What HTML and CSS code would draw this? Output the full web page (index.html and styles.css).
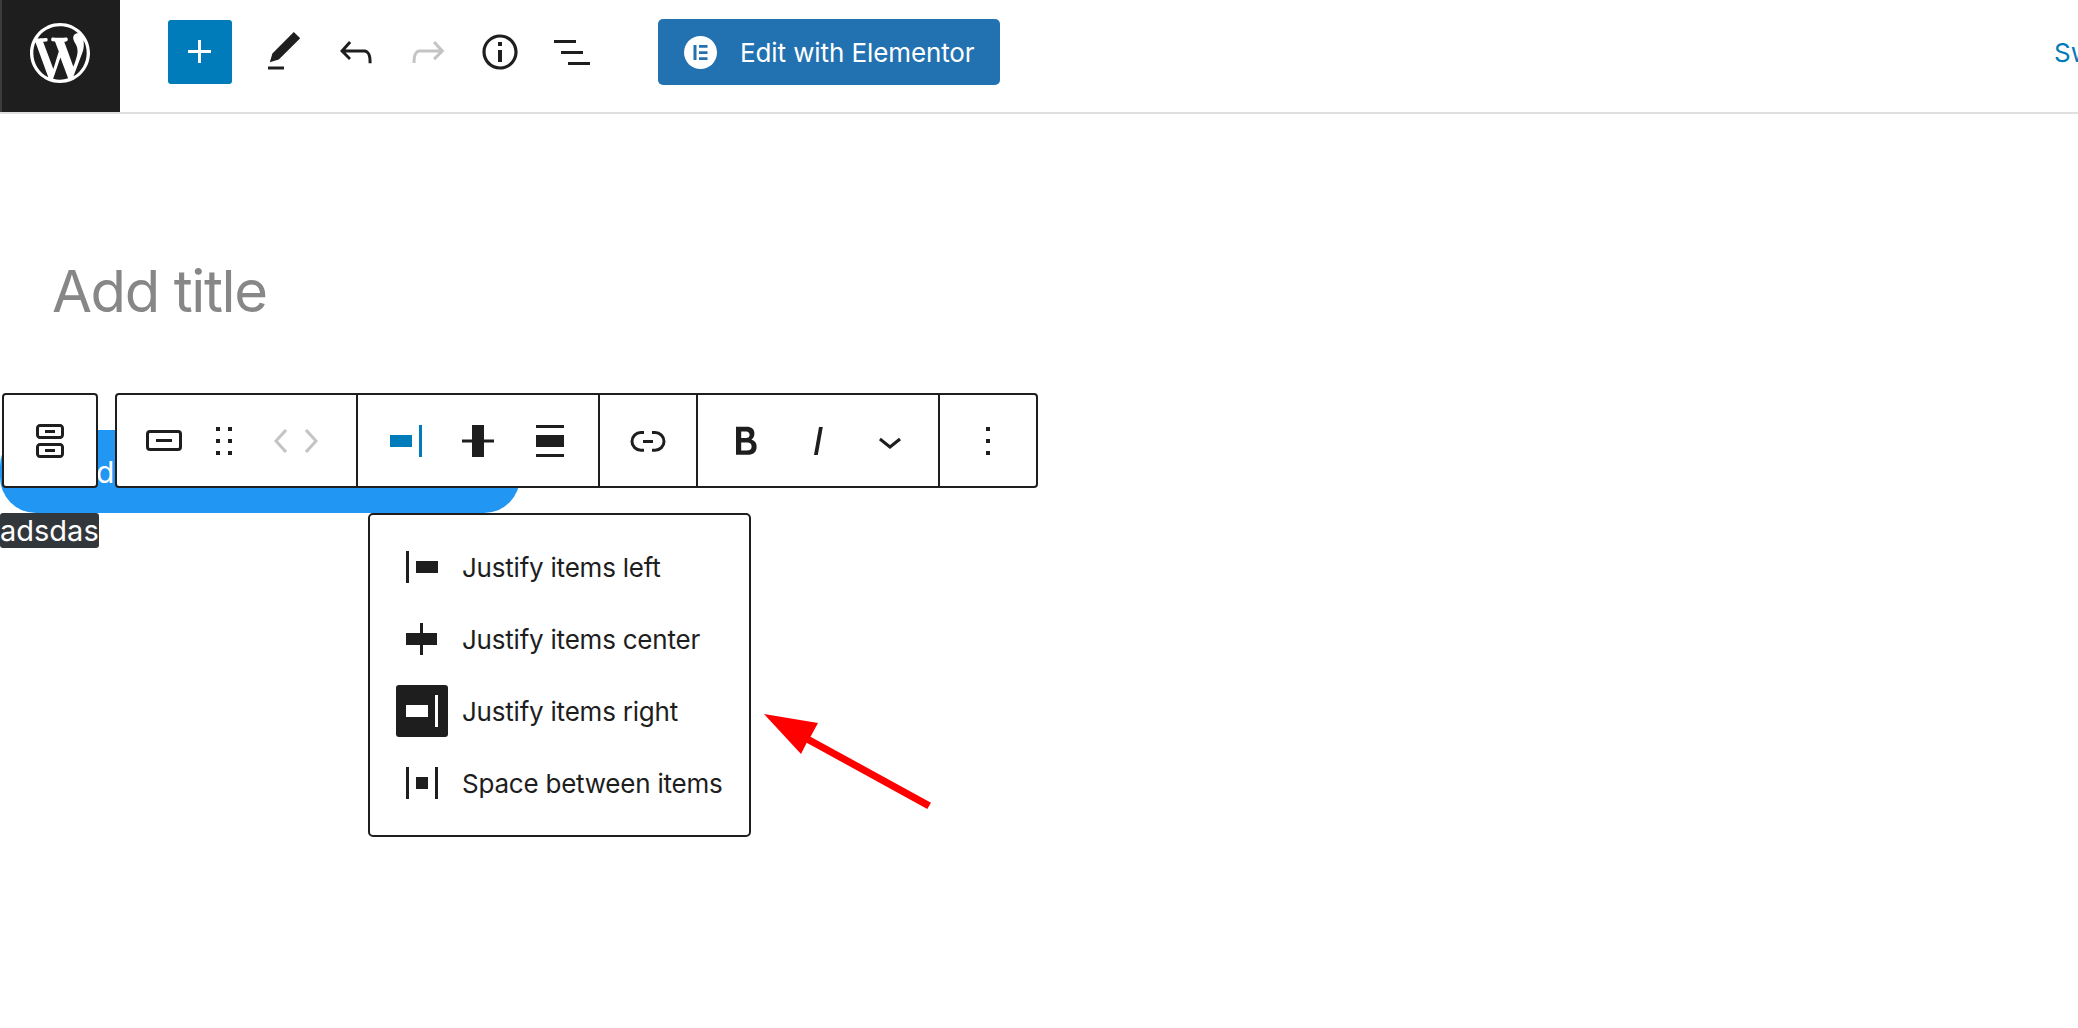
FILE: index.html
```html
<!DOCTYPE html>
<html lang="en">
<head>
<meta charset="utf-8">
<title>Edit Post</title>
<link rel="stylesheet" href="styles.css">
</head>
<body>
<header class="topbar">
  <a class="logo"><svg class="logo-svg" viewBox="0 0 20 20"><path d="M20 10c0-5.51-4.49-10-10-10C4.48 0 0 4.49 0 10c0 5.52 4.48 10 10 10 5.51 0 10-4.48 10-10zM7.78 15.37L4.37 6.22c.55-.02 1.17-.08 1.17-.08.5-.06.44-1.13-.06-1.11 0 0-1.45.11-2.37.11-.18 0-.37 0-.58-.01C4.12 2.69 6.87 1.11 10 1.11c2.33 0 4.45.87 6.05 2.34-.68-.11-1.65.39-1.65 1.58 0 .74.45 1.36.9 2.1.35.61.55 1.36.55 2.46 0 1.49-1.4 5-1.4 5l-3.03-8.37c.54-.02.82-.17.82-.17.5-.05.44-1.25-.06-1.22 0 0-1.44.12-2.38.12-.87 0-2.33-.12-2.33-.12-.5-.03-.56 1.2-.06 1.22l.92.08 1.26 3.41zM17.41 10c.24-.64.74-1.87.43-4.25.7 1.29 1.05 2.71 1.05 4.25 0 3.29-1.73 6.24-4.4 7.78.97-2.59 1.94-5.2 2.92-7.78zM6.1 18.09C3.12 16.65 1.11 13.53 1.11 10c0-1.3.23-2.48.72-3.59C3.25 10.3 4.67 14.2 6.1 18.09zm4.03-6.63l2.58 6.98c-.86.29-1.76.45-2.71.45-.79 0-1.57-.11-2.29-.33.81-2.38 1.62-4.74 2.42-7.1z"/></svg></a>
  <button class="add"><svg class="ic" viewBox="0 0 24 24"><path d="M11 12.5V17.5H12.5V12.5H17.5V11H12.5V6H11V11H6V12.5H11Z"/></svg></button>
  <div class="tools">
    <span class="tool"><svg class="ic" viewBox="0 0 24 24"><path d="M20.1 5.1L16.9 2 6.2 12.7l-1.3 4.4 4.5-1.3L20.1 5.1zM4 20.8h8v-1.5H4v1.5z"/></svg></span>
    <span class="tool"><svg class="ic" viewBox="0 0 24 24"><path d="M18.3 11.7c-.6-.6-1.4-.9-2.3-.9H6.7l2.9-3.3-1.1-1-4.5 5L8.5 16l1-1-2.7-2.7H16c.5 0 .9.2 1.3.5 1 1 1 3.4 1 4.5v.3h1.5v-.2c0-1.5 0-4.3-1.5-5.7z"/></svg></span>
    <span class="tool off"><svg class="ic" viewBox="0 0 24 24"><path d="M15.6 6.5l-1.1 1 2.9 3.3H8c-.9 0-1.7.3-2.3.9-1.4 1.5-1.4 4.2-1.4 5.6v.2h1.5v-.3c0-1.1 0-3.5 1-4.5.3-.3.7-.5 1.3-.5h9.2L14.5 15l1.1 1.1 4.6-4.6-4.6-5z"/></svg></span>
    <span class="tool"><svg class="ic" viewBox="0 0 24 24"><path d="M12 3.2c-4.8 0-8.8 3.9-8.8 8.8 0 4.8 3.9 8.8 8.8 8.8 4.8 0 8.8-3.9 8.8-8.8 0-4.8-4-8.8-8.8-8.8zm0 16c-4 0-7.2-3.3-7.2-7.2C4.8 8 8 4.8 12 4.8s7.2 3.3 7.2 7.2c0 4-3.2 7.2-7.2 7.2zM11 17h2v-6h-2v6zm0-8h2V7h-2v2z"/></svg></span>
    <span class="tool"><svg class="ic" viewBox="0 0 24 24"><path d="M3 6h11v1.5H3V6Zm3.5 5.5h11V13h-11v-1.5ZM21 17H10v1.5h11V17Z"/></svg></span>
  </div>
  <a class="elementor">
    <svg class="el-ic" viewBox="0 0 33 33"><circle cx="16.5" cy="16.5" r="16.5" fill="#fff"/><path fill="#2271b1" d="M9.5 9h3v15h-3zM15 9h8.5v2.7H15zM15 15.2h8.5v2.7H15zM15 21.3h8.5V24H15z"/></svg>
    <span>Edit with Elementor</span>
  </a>
  <a class="draft">Switch to draft</a>
</header>

<main class="editor">
  <h1 class="title">Add title</h1>
  <div class="cta">d</div>
  <div class="para"><span class="mark">adsdas</span></div>
</main>

<div class="switcher">
  <svg class="ic" viewBox="0 0 24 24"><path d="M14.5 17.5H9.5V16H14.5V17.5Z M14.5 8H9.5V6.5H14.5V8Z M7 3.5H17C18.1046 3.5 19 4.39543 19 5.5V9C19 10.1046 18.1046 11 17 11H7C5.89543 11 5 10.1046 5 9V5.5C5 4.39543 5.89543 3.5 7 3.5ZM17 5H7C6.72386 5 6.5 5.22386 6.5 5.5V9C6.5 9.27614 6.72386 9.5 7 9.5H17C17.2761 9.5 17.5 9.27614 17.5 9V5.5C17.5 5.22386 17.2761 5 17 5Z M7 13H17C18.1046 13 19 13.8954 19 15V18.5C19 19.6046 18.1046 20.5 17 20.5H7C5.89543 20.5 5 19.6046 5 18.5V15C5 13.8954 5.89543 13 7 13ZM17 14.5H7C6.72386 14.5 6.5 14.7239 6.5 15V18.5C6.5 18.7761 6.72386 19 7 19H17C17.2761 19 17.5 18.7761 17.5 18.5V15C17.5 14.7239 17.2761 14.5 17 14.5Z"/></svg>
</div>

<div class="toolbar">
  <div class="group g-move">
    <svg class="ic" viewBox="0 0 24 24"><path fill-rule="evenodd" d="M8 12.5h8V11H8v1.5Z M19 6.5H5a2 2 0 0 0-2 2V15a2 2 0 0 0 2 2h14a2 2 0 0 0 2-2V8.5a2 2 0 0 0-2-2ZM5 8h14a.5.5 0 0 1 .5.5V15a.5.5 0 0 1-.5.5H5a.5.5 0 0 1-.5-.5V8.5A.5.5 0 0 1 5 8Z"/></svg>
    <svg class="ic" viewBox="0 0 24 24"><path d="M8 7h2V5H8v2zm0 6h2v-2H8v2zm0 6h2v-2H8v2zm6-14v2h2V5h-2zm0 8h2v-2h-2v2zm0 6h2v-2h-2v2z"/></svg>
    <svg class="ic off prev" viewBox="0 0 24 24"><path d="M14.6 7l-1.2-1L8 12l5.4 6 1.2-1-4.6-5z"/></svg>
    <svg class="ic off next" viewBox="0 0 24 24"><path d="M10.6 6L9.4 7l4.6 5-4.6 5 1.2 1 5.4-6z"/></svg>
  </div>
  <div class="group g-just">
    <svg class="ic blue" viewBox="0 0 24 24"><path d="M4 15h11V9H4v6zM18.5 4v16H20V4h-1.5z"/></svg>
    <svg class="ic" viewBox="0 0 24 24"><path d="M20 11.25h-5V4H9v7.25H4v1.5h5V20h6v-7.25h5z"/></svg>
    <svg class="ic" viewBox="0 0 24 24"><path d="M5 4h14v1.5H5V4Zm0 5h14v6H5V9Zm0 9.5h14V20H5v-1.5Z"/></svg>
  </div>
  <div class="group g-link">
    <svg class="ic" viewBox="0 0 24 24"><path d="M10 17.389H8.444A5.194 5.194 0 1 1 8.444 7H10v1.5H8.444a3.694 3.694 0 0 0 0 7.389H10v1.5ZM14 7h1.556a5.194 5.194 0 0 1 0 10.39H14v-1.5h1.556a3.694 3.694 0 0 0 0-7.39H14V7Zm-4.5 6h5v-1.5h-5V13Z"/></svg>
  </div>
  <div class="group g-fmt">
    <svg class="ic" viewBox="0 0 24 24"><path d="M14.7 11.3c1-.6 1.5-1.6 1.5-3 0-2.3-1.3-3.4-4-3.4H7v14h5.8c1.4 0 2.5-.3 3.3-1 .8-.7 1.2-1.7 1.2-2.9.1-1.9-.8-3.1-2.6-3.7zm-5.1-4h2.3c.6 0 1.1.1 1.4.4.3.3.5.7.5 1.2s-.2 1-.5 1.2c-.3.3-.8.4-1.4.4H9.6V7.3zm4.6 9c-.4.3-1 .4-1.7.4H9.6v-3.9h2.9c.7 0 1.3.2 1.7.5.4.3.6.8.6 1.5s-.2 1.2-.6 1.5z"/></svg>
    <svg class="ic" viewBox="0 0 24 24"><path d="M12.5 5L10 19h1.9l2.5-14z"/></svg>
    <svg class="ic" viewBox="0 0 24 24"><path d="M17.5 11.6L12 16l-5.5-4.4.9-1.2L12 14l4.5-3.6 1 1.2z"/></svg>
  </div>
  <div class="group g-more">
    <svg class="ic" viewBox="0 0 24 24"><path d="M13 19h-2v-2h2v2zm0-6h-2v-2h2v2zm0-6h-2V5h2v2z"/></svg>
  </div>
</div>

<div class="menu">
  <div class="row"><span class="slot"><svg class="ic" viewBox="0 0 24 24"><path d="M9 9v6h11V9H9zM4 20h1.5V4H4v16z"/></svg></span><span>Justify items left</span></div>
  <div class="row"><span class="slot"><svg class="ic" viewBox="0 0 24 24"><path d="M12.5 15v5H11v-5H4V9h7V4h1.5v5h7v6h-7Z"/></svg></span><span>Justify items center</span></div>
  <div class="row"><span class="slot on"><svg class="ic" viewBox="0 0 24 24"><path d="M4 15h11V9H4v6zM18.5 4v16H20V4h-1.5z"/></svg></span><span>Justify items right</span></div>
  <div class="row"><span class="slot"><svg class="ic" viewBox="0 0 24 24"><path d="M9 15h6V9H9v6zm-5 5h1.5V4H4v16zM18.5 4v16H20V4h-1.5z"/></svg></span><span>Space between items</span></div>
</div>

<svg class="arrow" viewBox="0 0 220 140"><polygon points="24,24 78,33 70.5,46.7 191,112.7 187.3,119 66.7,52.7 61,64"/></svg>
</body>
</html>
```
FILE: styles.css
```css
* { box-sizing: border-box; }
html, body { margin: 0; height: 100%; }
body {
  position: relative;
  overflow: hidden;
  background: #fff;
  color: #1e1e1e;
  font-family: Inter, "Liberation Sans", sans-serif;
  font-size: 26px;
}
.ic { width: 48px; height: 48px; flex: none; display: block; fill: currentColor; }
.off { color: #c4c4c4; }
.blue { color: #007cba; }

.topbar {
  display: flex;
  align-items: center;
  height: 114px;
  padding-bottom: 8px;
  border-bottom: 2px solid #e0e0e0;
  white-space: nowrap;
}
.logo {
  flex: none;
  display: flex;
  align-items: center;
  justify-content: center;
  width: 120px;
  height: 112px;
  margin-bottom: -8px;
  padding: 0 2px 6px 0;
  background: #1e1e1e;
  border-left: 2px solid #3c3c3c;
}
.logo-svg { width: 60px; height: 60px; fill: #fff; }
.add {
  flex: none;
  display: flex;
  align-items: center;
  justify-content: center;
  width: 64px;
  height: 64px;
  margin-left: 48px;
  padding: 0;
  border: 0;
  border-radius: 3px;
  background: #007cba;
  color: #fff;
}
.tools { display: flex; margin-left: 16px; }
.tool { width: 72px; display: flex; justify-content: center; }
.elementor {
  flex: none;
  display: flex;
  align-items: center;
  gap: 23px;
  width: 342px;
  height: 66px;
  margin-left: 50px;
  padding-left: 26px;
  border-radius: 5px;
  background: #2271b1;
  color: #fff;
  font-weight: 400;
  letter-spacing: -0.1px;
}
.el-ic { width: 33px; height: 33px; flex: none; }
.draft { flex: none; margin-left: 1054px; color: #007cba; }

.title {
  margin: 0;
  padding: 142px 0 0 52px;
  height: 316px;
  font-size: 58px;
  font-weight: 400;
  line-height: 70px;
  letter-spacing: -1.4px;
  color: #878787;
}
.cta {
  width: 520px;
  height: 83px;
  padding: 22px 0 0 96px;
  border-radius: 36px;
  background: #2196f3;
  color: #fff;
  font-size: 30px;
  line-height: 40px;
}
.para { height: 36px; line-height: 36px; }
.mark {
  display: inline-block;
  height: 35px;
  border-radius: 3px;
  background: #32373c;
  color: #fff;
  font-size: 29px;
}

.switcher {
  position: absolute;
  left: 2px;
  top: 393px;
  width: 96px;
  height: 95px;
  display: flex;
  align-items: center;
  justify-content: center;
  background: #fff;
  border: 2px solid #1e1e1e;
  border-radius: 4px;
}
.toolbar {
  position: absolute;
  left: 115px;
  top: 393px;
  width: 923px;
  height: 95px;
  display: flex;
  background: #fff;
  border: 2px solid #1e1e1e;
  border-radius: 4px;
}
.group {
  display: flex;
  align-items: center;
  border-right: 2px solid #1e1e1e;
}
.group:last-child { border-right: 0; }
.g-move { width: 241px; padding-left: 23px; gap: 12px; }
.g-just { width: 242px; padding-left: 24px; gap: 24px; }
.g-link { width: 98px; justify-content: center; }
.g-fmt { width: 242px; padding-left: 24px; gap: 24px; }
.g-more { flex: 1; justify-content: center; }
.prev { margin-left: -2px; }
.next { margin-left: -32px; }

.menu {
  position: absolute;
  left: 368px;
  top: 513px;
  width: 383px;
  height: 324px;
  padding: 16px 0 0 26px;
  background: #fff;
  border: 2px solid #1e1e1e;
  border-radius: 5px;
  letter-spacing: -0.22px;
}
.row { display: flex; align-items: center; gap: 14px; height: 72px; }
.slot {
  width: 52px;
  height: 52px;
  display: flex;
  align-items: center;
  justify-content: center;
  border-radius: 3px;
}
.slot.on { background: #1e1e1e; color: #fff; }

.arrow {
  position: absolute;
  left: 740px;
  top: 690px;
  width: 220px;
  height: 140px;
  fill: #f00;
}
```
